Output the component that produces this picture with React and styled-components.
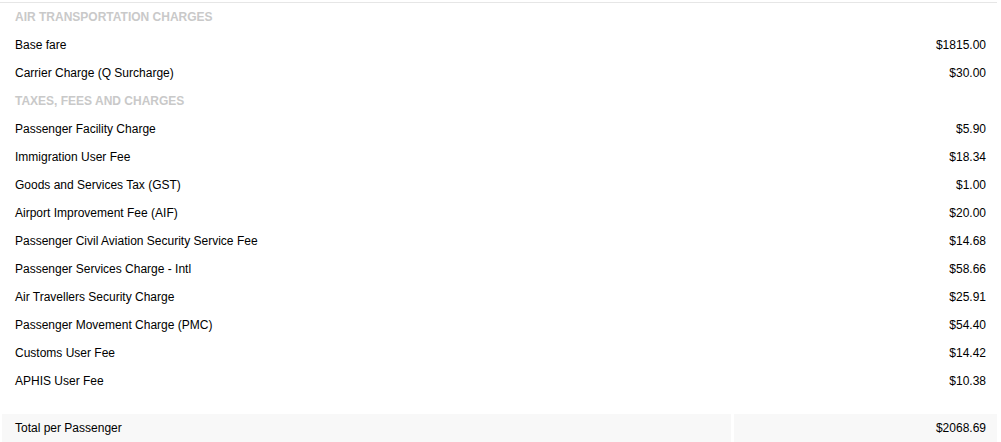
// Packages
import React from "react"
import styled, { createGlobalStyle } from "styled-components"

// Data
const sections = [
    {
        title: "Air transportation charges",
        items: [
            ["Base fare", "$1815.00"],
            ["Carrier Charge (Q Surcharge)", "$30.00"],
        ],
    },
    {
        title: "Taxes, fees and charges",
        items: [
            ["Passenger Facility Charge", "$5.90"],
            ["Immigration User Fee", "$18.34"],
            ["Goods and Services Tax (GST)", "$1.00"],
            ["Airport Improvement Fee (AIF)", "$20.00"],
            ["Passenger Civil Aviation Security Service Fee", "$14.68"],
            ["Passenger Services Charge - Intl", "$58.66"],
            ["Air Travellers Security Charge", "$25.91"],
            ["Passenger Movement Charge (PMC)", "$54.40"],
            ["Customs User Fee", "$14.42"],
            ["APHIS User Fee", "$10.38"],
        ],
    },
]

// Styles
const GlobalStyle = createGlobalStyle`
    body {
        margin: 0;
        background: #fff;
        font-family: "Liberation Sans", Arial, sans-serif;
        font-size: 12px;
        color: #000;
    }
`

const Breakdown = styled.div`
    width: 997px;
    padding-top: 2px;
`

const List = styled.div`
    border-top: 1px solid #e6e6e6;
    padding-bottom: 19px;
`

const Row = styled.div`
    display: flex;
    justify-content: space-between;
    align-items: center;
    height: 28px;
    padding: 0 11px 0 15px;
`

const Heading = styled(Row)`
    font-weight: bold;
    text-transform: uppercase;
    color: #c9c9c9;
`

const TotalRow = styled.div`
    display: grid;
    grid-template-columns: 729px 1fr;
    gap: 3px;
    padding-left: 2px;
`

const TotalCell = styled.div`
    display: flex;
    align-items: center;
    height: 28px;
    background: #f8f8f8;
    padding: ${({ $right }) => ($right ? "0 11px 0 0" : "0 0 0 13px")};
    justify-content: ${({ $right }) => ($right ? "flex-end" : "flex-start")};
`

function App() {
    return (
        <>
            <GlobalStyle />

            <Breakdown>
                <List>
                    {sections.map(section => (
                        <React.Fragment key={section.title}>
                            <Heading>{section.title}</Heading>

                            {section.items.map(([label, amount]) => (
                                <Row key={label}>
                                    <span>{label}</span>
                                    <span>{amount}</span>
                                </Row>
                            ))}
                        </React.Fragment>
                    ))}
                </List>

                <TotalRow>
                    <TotalCell>Total per Passenger</TotalCell>
                    <TotalCell $right>$2068.69</TotalCell>
                </TotalRow>
            </Breakdown>
        </>
    )
}

export default App
